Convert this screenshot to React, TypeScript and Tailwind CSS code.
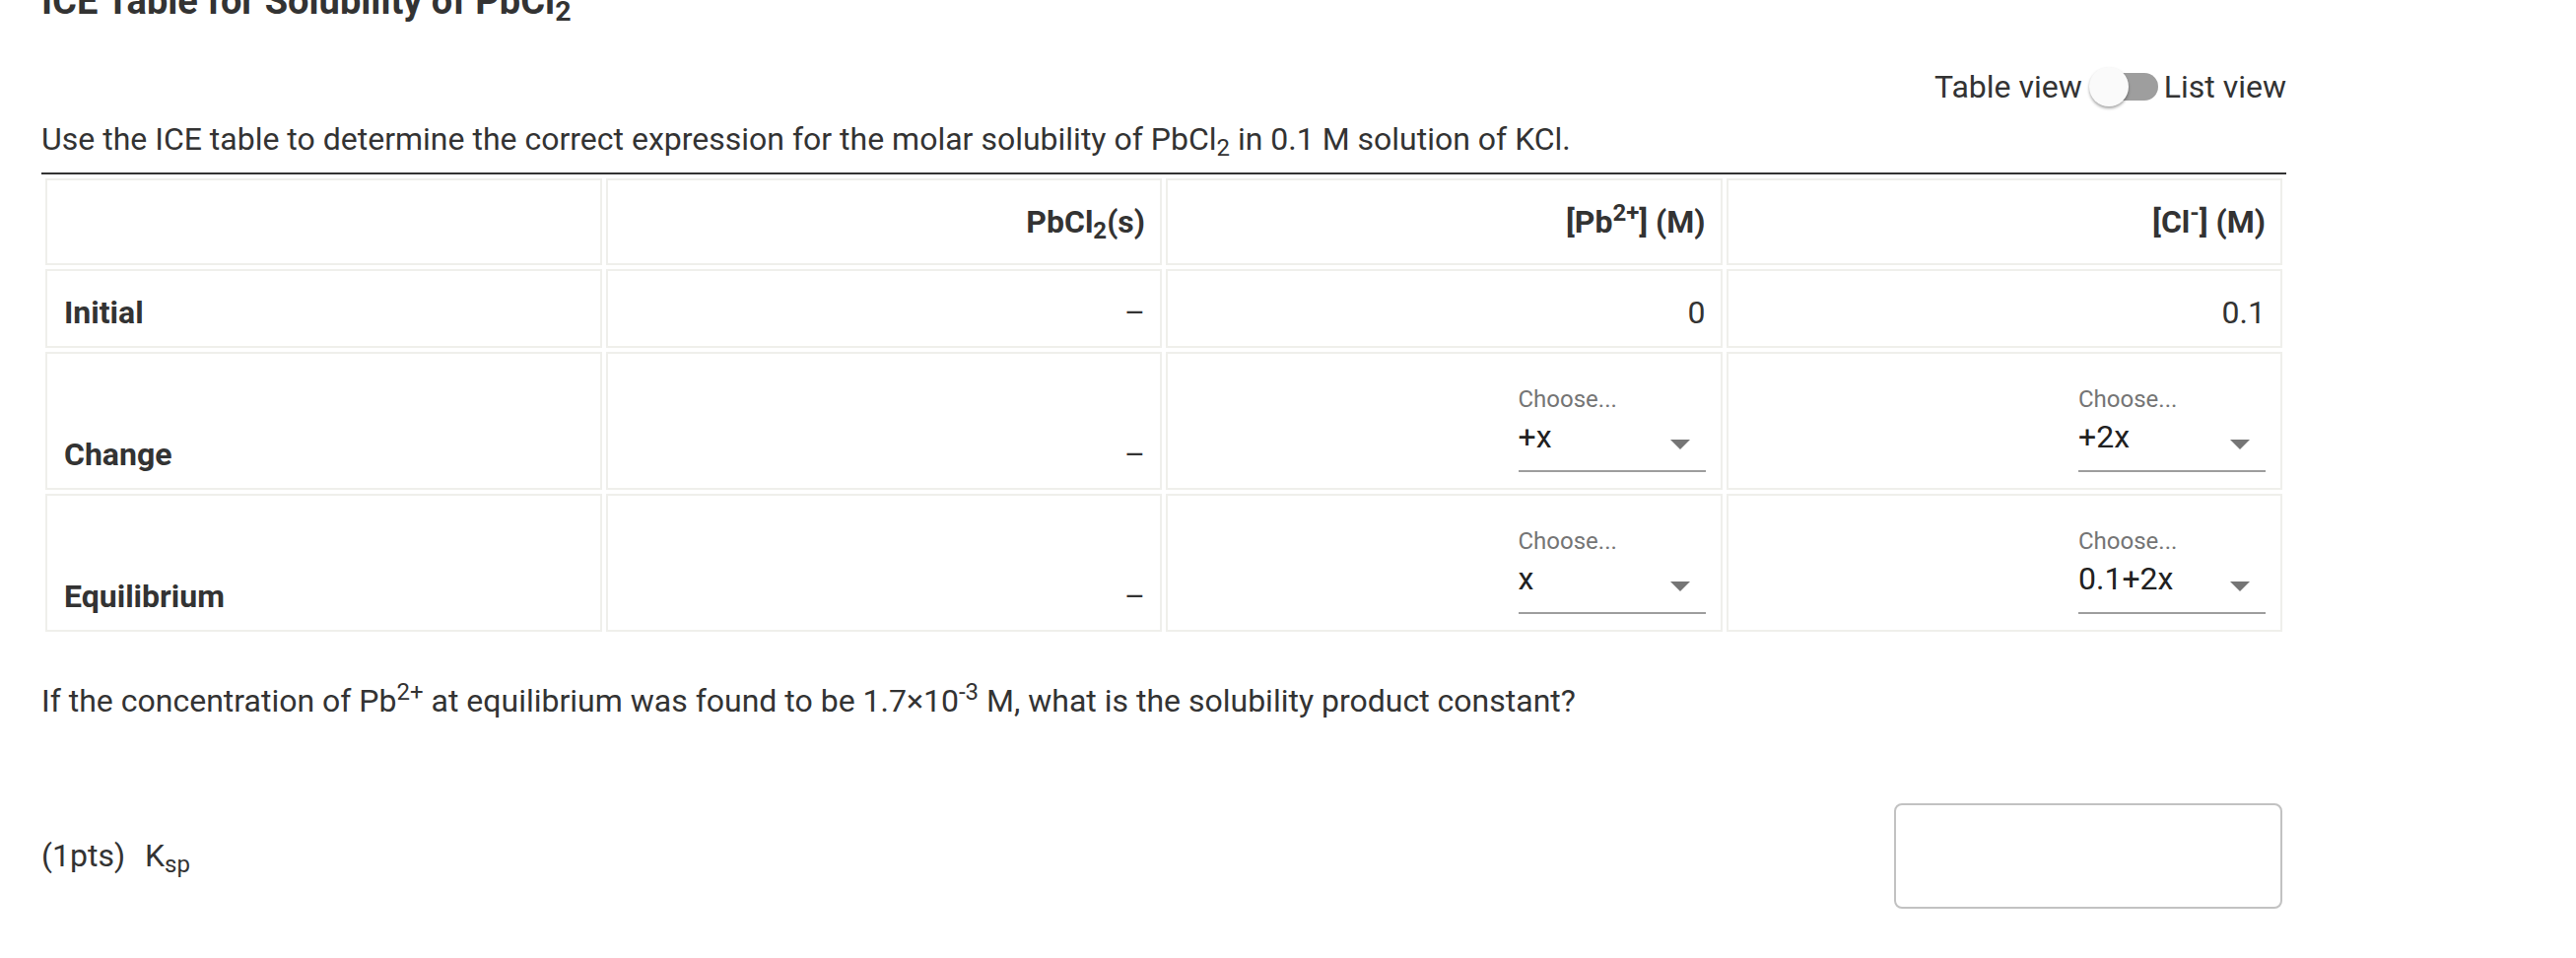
import type { ReactNode } from 'react'

const font = "font-['Roboto',sans-serif]"

function Cell({ children, className = '' }: { children?: ReactNode; className?: string }) {
  return <div className={`flex border-2 border-[#efefeb] px-[15px] ${className}`}>{children}</div>
}

function Select({ value }: { value: string }) {
  return (
    <div className="w-[190px] border-b-2 border-[#9e9e9e] pb-[18px]">
      <div className="text-[24px] leading-[24px] text-[#757575]">Choose...</div>
      <div className="mt-[10px] flex items-start justify-between">
        <span className="text-[32px] leading-[32px] text-[#212121]">{value}</span>
        <svg className="mt-[19px] mr-[16px]" width="20" height="10" viewBox="0 0 20 10">
          <path d="M0 0h20L10 10z" fill="#757575" />
        </svg>
      </div>
    </div>
  )
}

function Toggle() {
  return (
    <div className="flex items-center justify-end text-[32px] leading-[40px] text-[#333]">
      <span>Table view</span>
      <div className="relative ml-[13px] mr-[6px] h-[28px] w-[64px] rounded-full bg-[#9e9e9e]">
        <div className="absolute left-[-6px] top-[-6px] h-[40px] w-[40px] rounded-full bg-[#fafafa] shadow-[0_2px_3px_rgba(0,0,0,0.35)]" />
      </div>
      <span>List view</span>
    </div>
  )
}

export default function App() {
  const label = 'text-[32px] leading-[32px] font-bold text-[#333]'
  const num = 'text-[32px] leading-[32px] text-[#333]'

  return (
    <div className={`${font} min-h-[972px] bg-white text-[#333]`}>
      <div className="ml-[42px] w-[2278px]">
        <h2 className="mt-[-21px] text-[38px] leading-[1.2] font-bold text-[#333]">
          ICE Table for Solubility of PbCl<sub>2</sub>
        </h2>

        <div className="mt-[43px]">
          <Toggle />
        </div>

        <p className="mt-[9px] text-[32px] leading-[48px]">
          Use the ICE table to determine the correct expression for the molar solubility of PbCl<sub>2</sub> in 0.1 M
          solution of KCl.
        </p>

        <div className="mt-[10px] h-[2px] bg-[#333]" />

        <div className="grid grid-cols-4 gap-[4px] p-[4px]">
          {/* header */}
          <Cell className="h-[88px]" />
          <Cell className="h-[88px] items-center justify-end">
            <span className={label}>
              PbCl<sub>2</sub>(s)
            </span>
          </Cell>
          <Cell className="h-[88px] items-center justify-end">
            <span className={label}>
              [Pb<sup>2+</sup>] (M)
            </span>
          </Cell>
          <Cell className="h-[88px] items-center justify-end">
            <span className={label}>
              [Cl<sup>-</sup>] (M)
            </span>
          </Cell>

          {/* initial */}
          <Cell className="h-[80px] items-end pb-[18px] pl-[17px]">
            <span className={label}>Initial</span>
          </Cell>
          <Cell className="h-[80px] items-end justify-end pb-[18px]">
            <span className={num}>–</span>
          </Cell>
          <Cell className="h-[80px] items-end justify-end pb-[18px]">
            <span className={num}>0</span>
          </Cell>
          <Cell className="h-[80px] items-end justify-end pb-[18px]">
            <span className={num}>0.1</span>
          </Cell>

          {/* change */}
          <Cell className="h-[140px] items-end pb-[18px] pl-[17px]">
            <span className={label}>Change</span>
          </Cell>
          <Cell className="h-[140px] items-end justify-end pb-[18px]">
            <span className={num}>–</span>
          </Cell>
          <Cell className="h-[140px] items-end justify-end pb-[16px]">
            <Select value="+x" />
          </Cell>
          <Cell className="h-[140px] items-end justify-end pb-[16px]">
            <Select value="+2x" />
          </Cell>

          {/* equilibrium */}
          <Cell className="h-[140px] items-end pb-[18px] pl-[17px]">
            <span className={label}>Equilibrium</span>
          </Cell>
          <Cell className="h-[140px] items-end justify-end pb-[18px]">
            <span className={num}>–</span>
          </Cell>
          <Cell className="h-[140px] items-end justify-end pb-[16px]">
            <Select value="x" />
          </Cell>
          <Cell className="h-[140px] items-end justify-end pb-[16px]">
            <Select value="0.1+2x" />
          </Cell>
        </div>

        <p className="mt-[42px] text-[32px] leading-[48px]">
          If the concentration of Pb<sup>2+</sup> at equilibrium was found to be 1.7×10<sup>-3</sup> M, what is the
          solubility product constant?
        </p>

        <div className="mt-[80px] flex items-center justify-between pr-[4px]">
          <div className="text-[32px] leading-[48px]">
            (1pts)
            <span className="ml-[20px]">
              K<sub>sp</sub>
            </span>
          </div>
          <div className="h-[107px] w-[394px] rounded-[8px] border-2 border-[#c2c2c2]" />
        </div>
      </div>
    </div>
  )
}
